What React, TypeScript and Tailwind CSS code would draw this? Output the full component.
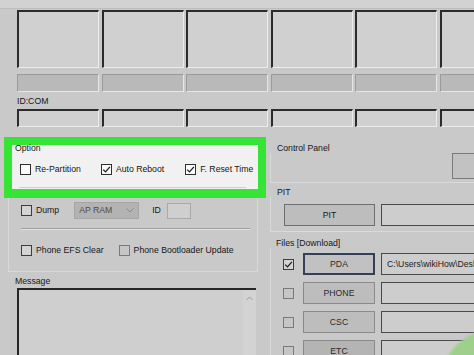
import React from "react";

type BoxProps = { checked?: boolean; dim?: boolean; white?: boolean };

const CheckBox = ({ checked = false, dim = false, white = false }: BoxProps) => (
    <div
        className={
            "w-[11px] h-[11px] shrink-0 border flex items-center justify-center " +
            (dim
                ? "border-[#7a7a7a] bg-[#c6c6c6]"
                : white
                  ? "border-[#2e2e2e] bg-[#fbfbfb]"
                  : "border-[#3c3c3c] bg-[#d4d4d4]")
        }
    >
        {checked && (
            <svg width="9" height="9" viewBox="0 0 9 9">
                <path
                    d="M1.2 4.6 L3.5 6.9 L7.9 1.8"
                    fill="none"
                    stroke="#1e1e1e"
                    strokeWidth="1.3"
                />
            </svg>
        )}
    </div>
);

const Slot = () => (
    <div className="w-[82px] h-full shrink-0 bg-[#d0d0d0] border-t-2 border-l-2 border-t-[#2b2b2b] border-l-[#2b2b2b] border-r border-b border-r-[#ececec] border-b-[#ececec]" />
);

const Bar = () => (
    <div className="w-[82px] h-full shrink-0 bg-[#b9b9b9] border border-t-[#9a9a9a] border-l-[#9a9a9a] border-r-[#e6e6e6] border-b-[#e6e6e6]" />
);

const Field = ({ text }: { text?: string }) => (
    <div className="w-full min-w-0 h-full bg-[#cdcdcd] border border-[#4a4a4a] border-r-0 flex items-center pl-[5px] whitespace-nowrap overflow-hidden text-[#222]">
        {text}
    </div>
);

const fileRows = [
    { name: "PDA", checked: true, path: "C:\\Users\\wikiHow\\Desktop" },
    { name: "PHONE", checked: false, path: "" },
    { name: "CSC", checked: false, path: "" },
    { name: "ETC", checked: false, path: "" },
];

const six = [0, 1, 2, 3, 4, 5];

export default function App() {
    return (
        <div className="relative w-[474px] h-[355px] overflow-hidden bg-[#c9c9c9] text-[8.7px] leading-none text-[#161616] font-['Liberation_Sans',Arial,sans-serif]">
            {/* top strip */}
            <div className="h-[9px] bg-[#d2d2d2] border-b border-[#bdbdbd]" />

            {/* com slots */}
            <div className="flex gap-[2.5px] pl-[17px] h-[58px] mt-px">
                {six.map((i) => (
                    <Slot key={i} />
                ))}
            </div>
            <div className="flex gap-[2.5px] pl-[17px] h-[18px] mt-[6px]">
                {six.map((i) => (
                    <Bar key={i} />
                ))}
            </div>
            <div className="h-[17px] pl-[17px] pt-[2px] flex items-center">ID:COM</div>
            <div className="flex gap-[2.5px] pl-[17px] h-[18px]">
                {six.map((i) => (
                    <Slot key={i} />
                ))}
            </div>

            {/* lower section */}
            <div className="flex mt-[10px]">
                {/* left column */}
                <div className="w-[266px] shrink-0 flex flex-col">
                    <div className="ml-[4px] w-[262px] h-[61px] border-x-[8px] border-t-[8px] border-b-[9px] border-[#35e435] bg-[#f1f1f1] flex flex-col">
                        <div className="pl-[3px] h-[6px] pt-px flex items-center">Option</div>
                        <div className="flex items-center h-[32px] pl-[8px] pt-[5px]">
                            <CheckBox white />
                            <span className="ml-[4px]">Re-Partition</span>
                            <div className="ml-[20px]">
                                <CheckBox white checked />
                            </div>
                            <span className="ml-[4px]">Auto Reboot</span>
                            <div className="ml-[21px]">
                                <CheckBox white checked />
                            </div>
                            <span className="ml-[4px]">F. Reset Time</span>
                        </div>
                        <div className="mt-auto mb-px ml-[7px] w-[227px] h-px bg-[#cfcfcf]" />
                    </div>

                    <div className="ml-[8px] w-[250px] h-[74px] border-x border-b border-[#d9d9d9] flex flex-col">
                        <div className="flex items-center h-[17px] mt-[4px] pl-[12px]">
                            <CheckBox />
                            <span className="ml-[4px]">Dump</span>
                            <div className="ml-[15px] w-[65px] h-[17px] bg-[#b3b3b3] border border-[#a6a6a6] flex items-center pl-[4px] text-[#4d4d4d]">
                                <span>AP RAM</span>
                                <svg
                                    className="ml-auto mr-[4px]"
                                    width="8"
                                    height="5"
                                    viewBox="0 0 8 5"
                                >
                                    <path
                                        d="M0.5 0.5 L4 4 L7.5 0.5"
                                        fill="none"
                                        stroke="#8a8a8a"
                                        strokeWidth="1"
                                    />
                                </svg>
                            </div>
                            <span className="ml-[13px]">ID</span>
                            <div className="ml-[6px] w-[24px] h-[16px] bg-[#cfcfcf] border border-[#a9a9a9]" />
                        </div>
                        <div className="ml-[12px] mt-[9px] w-[229px] h-[2px] border-t border-[#9d9d9d] border-b border-b-[#e4e4e4]" />
                        <div className="flex items-center h-[12px] mt-[14px] pl-[12px]">
                            <CheckBox />
                            <span className="ml-[4px]">Phone EFS Clear</span>
                            <div className="ml-[15px]">
                                <CheckBox dim />
                            </div>
                            <span className="ml-[4px]">Phone Bootloader Update</span>
                        </div>
                    </div>

                    <div className="h-[16px] pl-[15px] pt-[2px] flex items-center">Message</div>
                    <div className="ml-[17px] w-[239px] h-[80px] bg-[#cfcfcf] border-t-2 border-l-2 border-[#262626] flex justify-end">
                        <div className="w-[13px] h-full bg-[#d3d3d3] flex justify-center pt-[6px]">
                            <svg width="7" height="5" viewBox="0 0 7 5">
                                <path
                                    d="M0.5 4 L3.5 1 L6.5 4"
                                    fill="none"
                                    stroke="#9a9a9a"
                                    strokeWidth="1"
                                />
                            </svg>
                        </div>
                    </div>
                </div>

                {/* right column */}
                <div className="flex-1 min-w-0 flex flex-col">
                    <div className="h-[10px] mt-[6px] pl-[11px] flex items-center">Control Panel</div>
                    <div className="ml-[4px] h-[30px] border-l border-b border-[#dadada] flex justify-end items-start">
                        <div className="w-[22px] h-[26px] bg-[#c2c2c2] border border-[#7c7c7c] border-r-0" />
                    </div>
                    <div className="h-[10px] mt-[4px] pl-[11px] flex items-center">PIT</div>
                    <div className="ml-[4px] h-[35px] border-l border-b border-[#dadada] flex items-start pt-[7px] pl-[13px]">
                        <div className="w-[91px] shrink-0 h-[22px] bg-[#bdbdbd] border border-[#6e6e6e] flex items-center justify-center">
                            PIT
                        </div>
                        <div className="ml-[6px] flex-1 min-w-0 h-[22px]">
                            <Field />
                        </div>
                    </div>
                    <div className="h-[10px] mt-[6px] pl-[10px] flex items-center">Files [Download]</div>
                    <div className="ml-[4px] pt-[5px] flex flex-col gap-[7px] border-l border-[#dadada]">
                        {fileRows.map((row) => (
                            <div key={row.name} className="flex items-center h-[22px] pl-[12px]">
                                <CheckBox checked={row.checked} dim={!row.checked} />
                                <div
                                    className={
                                        "ml-[9px] w-[72px] shrink-0 h-full flex items-center justify-center text-[#2a2a2a] " +
                                        (row.name === "PDA"
                                            ? "bg-[#c1c1c1] border-2 border-[#34405a]"
                                            : row.name === "ETC"
                                              ? "bg-[#b4b4b4] border border-[#8a8a8a]"
                                              : "bg-[#bdbdbd] border border-[#8a8a8a]")
                                    }
                                >
                                    {row.name}
                                </div>
                                <div className="ml-[6px] flex-1 min-w-0 h-full">
                                    <Field text={row.path} />
                                </div>
                            </div>
                        ))}
                    </div>
                </div>
            </div>

            {/* blurred wikiHow circle in the corner */}
            <div className="absolute left-[441px] top-[330px] w-[104px] h-[104px] rounded-full bg-[#9fcf8d] blur-[1px]" />
        </div>
    );
}
